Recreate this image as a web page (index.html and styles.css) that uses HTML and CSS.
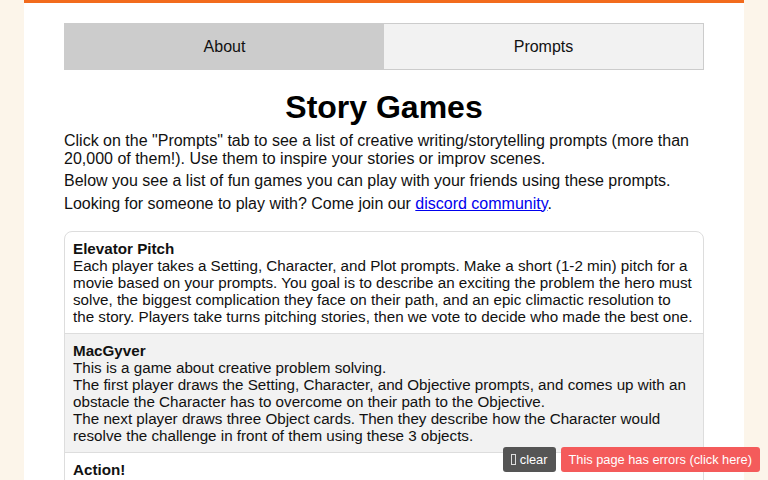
FILE: index.html
```html
<!DOCTYPE html>
<html>
<head>
<meta charset="utf-8">
<link rel="stylesheet" href="styles.css">
</head>
<body>
<div class="page">
  <nav class="tabs">
    <div class="tab active">About</div>
    <div class="tab">Prompts</div>
  </nav>
  <h1 class="title">Story Games</h1>
  <p class="intro">Click on the "Prompts" tab to see a list of creative writing/storytelling prompts (more than 20,000 of them!). Use them to inspire your stories or improv scenes.</p>
  <p class="intro">Below you see a list of fun games you can play with your friends using these prompts.</p>
  <p class="intro">Looking for someone to play with? Come join our <a href="#">discord community</a>.</p>
  <div class="games">
    <div class="game">
      <div class="game-name">Elevator Pitch</div>
      <div>Each player takes a Setting, Character, and Plot prompts. Make a short (1-2 min) pitch for a movie based on your prompts. You goal is to describe an exciting the problem the hero must solve, the biggest complication they face on their path, and an epic climactic resolution to the story. Players take turns pitching stories, then we vote to decide who made the best one.</div>
    </div>
    <div class="game alt">
      <div class="game-name">MacGyver</div>
      <div>This is a game about creative problem solving.</div>
      <div>The first player draws the Setting, Character, and Objective prompts, and comes up with an obstacle the Character has to overcome on their path to the Objective.</div>
      <div>The next player draws three Object cards. Then they describe how the Character would resolve the challenge in front of them using these 3 objects.</div>
    </div>
    <div class="game">
      <div class="game-name">Action!</div>
      <div>Players take turns acting out a scene based on the prompts.</div>
    </div>
  </div>
</div>
<div class="errbar">
  <span class="btn clear"><span class="icon"></span> clear</span>
  <span class="btn errors">This page has errors (click here)</span>
</div>
</body>
</html>
```
FILE: styles.css
```css
html, body {
  margin: 0;
  padding: 0;
}
body {
  background: #fcf5ea;
  font-family: "Liberation Sans", Arial, sans-serif;
  color: #111;
  height: 480px;
  overflow: hidden;
}
.page {
  width: 640px;
  margin: 0 24px;
  padding: 20px 40px 0;
  background: #fff;
  border-top: 3px solid #f26b1d;
  min-height: 480px;
}
.tabs {
  display: flex;
  border: 1px solid #ccc;
  height: 45px;
}
.tab {
  flex: 1;
  display: flex;
  align-items: center;
  justify-content: center;
  font-size: 16px;
  background: #f2f2f2;
  color: #111;
}
.tab.active {
  background: #ccc;
}
.title {
  font-size: 32px;
  font-weight: bold;
  text-align: center;
  margin: 19px 0 6px;
  line-height: 37px;
  color: #000;
}
.intro {
  font-size: 16px;
  margin: 0 0 5px;
  line-height: 17.5px;
  color: #111;
}
.intro a {
  color: #0000ee;
}
.games {
  margin-top: 19px;
  border: 1px solid #ddd;
  border-radius: 8px;
  overflow: hidden;
}
.game {
  padding: 8px;
  font-size: 15.2px;
  line-height: 17px;
  color: #111;
}
.game + .game {
  border-top: 1px solid #ddd;
}
.game.alt {
  background: #f2f2f2;
}
.game-name {
  font-weight: bold;
}
.errbar {
  position: fixed;
  right: 8px;
  bottom: 8px;
  display: flex;
  gap: 5px;
}
.btn {
  font-size: 12.8px;
  line-height: 25px;
  padding: 0 8px;
  border-radius: 3px;
  color: #fff;
}
.btn .icon {
  display: inline-block;
  width: 3px;
  height: 9px;
  border: 1px solid #ddd;
  vertical-align: -1px;
}
.btn.clear {
  background: #555;
}
.btn.errors {
  background: #f45b5b;
}
```
